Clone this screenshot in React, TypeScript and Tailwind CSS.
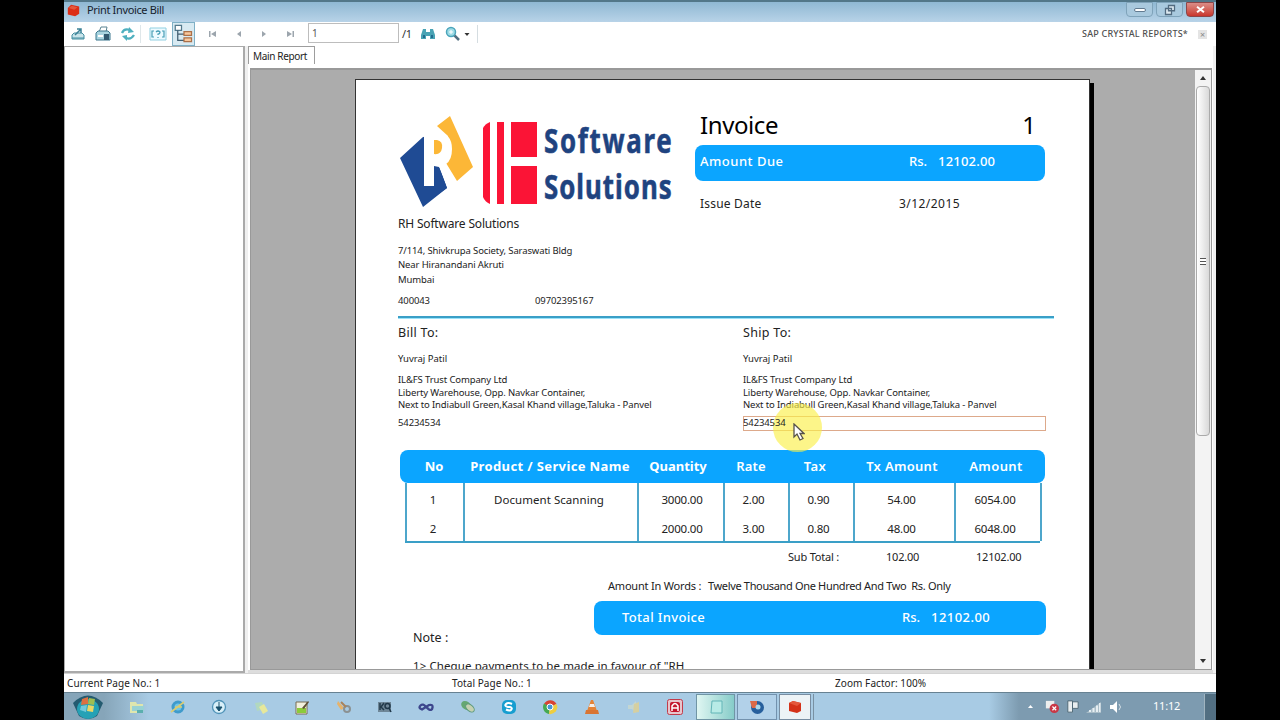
import type { ReactNode } from 'react';

const columns = [
    { label: 'No', head: 'w-[66px] pl-0.5 font-bold', cell: 'w-[58px] pr-1', values: ['1', '2'] },
    { label: 'Product / Service Name', head: 'w-[168px] font-bold tracking-[0.37px]', cell: 'w-[174px] pr-1', values: ['Document Scanning', ''] },
    { label: 'Quantity', head: 'w-[88px] font-bold', cell: 'w-[86px] pl-0.5', values: ['3000.00', '2000.00'] },
    { label: 'Rate', head: 'w-[58px] font-semibold tracking-[0.2px]', cell: 'w-[65px] pr-1.5', values: ['2.00', '3.00'] },
    { label: 'Tax', head: 'w-[70px] font-semibold tracking-[0.4px]', cell: 'w-[65px] pr-1.5', values: ['0.90', '0.80'] },
    { label: 'Tx Amount', head: 'w-[104px] font-semibold tracking-[0.3px]', cell: 'w-[101px] pr-1.5', values: ['54.00', '48.00'] },
    { label: 'Amount', head: 'w-[84px] font-semibold tracking-[0.4px]', cell: 'w-[88px] pr-1.5 border-r-2', values: ['6054.00', '6048.00'] },
];

function Icon({ size = 16, children }: { size?: number; children: ReactNode }) {
    return (
        <svg width={size} height={size} viewBox="0 0 16 16" fill="none" className="shrink-0">
            {children}
        </svg>
    );
}

function Logo() {
    return (
        <svg width="280" height="96" viewBox="0 0 280 96" className="block">
            <path d="M2 42 25 21 34 20V50L42 52 49 72 25 91Z" fill="#1f4b94" />
            <path d="M39 10 52 0 75 51 59 65 48 47 50 20Z" fill="#fcb737" />
            <path d="M26 16H39Q54 17 54 33 54 44 48 48L58 66 50 73 41 51H36V70H26Z" fill="#fff" />
            <path d="M36 24H39Q45 25 44 32 43 39 36 38Z" fill="#fcb737" />
            <path d="M36 50 41 51 49 72 36 81Z" fill="#1f4b94" />
            <path d="M92 6V88Q87 86 85 81V12Q87 8 92 6Z" fill="#fb1436" />
            <path d="M99 6h7v82h-7zM113 6h26v35h-26zM113 50h26v38h-26z" fill="#fb1436" />
            <g fontSize="34" fontWeight="700" fill="#1f4380" stroke="#1f4380" strokeWidth="0.6" transform="translate(146 0) scale(.76 1)">
                <text y="37" textLength="168" lengthAdjust="spacing">
                    Software
                </text>
                <text y="83" textLength="168" lengthAdjust="spacing">
                    Solutions
                </text>
            </g>
        </svg>
    );
}

function TitleBar() {
    return (
        <div className="flex h-[22px] shrink-0 items-start border-t-2 border-[#527789] bg-gradient-to-b from-[#8fb8d3] to-[#b8d3e8]">
            <div className="flex h-4 items-center pl-[3px]">
                <Icon size={13}>
                    <path d="M1 5 5 1 15 3V12L10 15 1 13Z" fill="#dc2d16" />
                    <path d="M2 5 6 2 13 4 9 7Z" fill="#e4583c" />
                </Icon>
                <span className="ml-[7px] text-[11px] leading-4 tracking-[-0.35px] text-[#16222c]">Print Invoice Bill</span>
            </div>
            <div className="ml-auto flex h-[15px] gap-[3px] pr-0.5">
                <div className="flex w-[27px] items-center justify-center rounded-b-sm border border-[#7fa3ba] bg-[#a9c9de]">
                    <span className="h-1 w-3 rounded-sm border border-[#627b91] bg-white" />
                </div>
                <div className="flex w-[27px] items-center justify-center rounded-b-sm border border-[#7fa3ba] bg-[#a9c9de]">
                    <Icon size={12}>
                        <path d="M6 2h8v7H6zM2 6h8v8H2z" fill="#dde9f0" stroke="#526b80" strokeWidth="1.7" />
                    </Icon>
                </div>
                <div className="flex w-[28px] items-center justify-center rounded-b-sm border border-[#8d4648] bg-gradient-to-b from-[#d98c87] to-[#c9332b]">
                    <Icon size={11}>
                        <path d="m3 4 10 8M13 4 3 12" stroke="#fff" strokeWidth="3" />
                    </Icon>
                </div>
            </div>
        </div>
    );
}

function Toolbar() {
    return (
        <div className="flex h-6 shrink-0 items-center bg-white">
            <div className="flex w-[76px] items-center gap-[9px] pl-[6px]">
                <Icon>
                    <path d="M2 9 4 7h8l2 2v4H2zM2 12h12" fill="#c9e4ea" stroke="#438da0" />
                    <path d="M5 9 11 3M7 3h4v4" stroke="#3b8196" strokeWidth="1.5" />
                </Icon>
                <Icon>
                    <path d="M4 6 6 1h6l-1 5" fill="#fff" stroke="#5a8392" />
                    <path d="M1 7 3 5h10l2 2v7H1z" fill="#a9d5e1" stroke="#3a778d" />
                    <path d="M9 8h5v6H9z" fill="#315a71" />
                    <path d="M3 9h5v2H3z" fill="#fff" />
                </Icon>
                <Icon>
                    <path d="M2 7Q4 2 10 4M14 9Q11 14 6 12" stroke="#4fb0bf" strokeWidth="2.3" />
                    <path d="m9 1 5 5-6 1zM7 9l-5 1 5 5z" fill="#4fb0bf" />
                </Icon>
            </div>
            <div className="h-[18px] w-px bg-[#dfe7ea]" />
            <div className="flex w-[33px] justify-center">
                <svg width="18" height="15" viewBox="0 0 18 15" fill="none">
                    <path d="M1 1h16v12H1z" fill="#edfaff" stroke="#91d0e2" />
                    <path d="M5 4H3v6h2M13 4h2v6h-2M7 5q2-2 4 0 0 2-2 2v1M9 10v1" stroke="#459db5" strokeWidth="1.2" />
                </svg>
            </div>
            <div className="-ml-0.5 flex h-6 w-[23px] items-center justify-center border border-[#7fb0c6] bg-[#d8eaf2]">
                <Icon size={20}>
                    <path d="M1 1h5v4H1z" fill="#fff" stroke="#53798c" />
                    <path d="M3 5v8h5M3 8h5" stroke="#415e71" />
                    <path d="M8 6h6v3H8zM8 11h6v3H8z" fill="#f8c79c" stroke="#ac7049" />
                </Icon>
            </div>
            <div className="flex w-[113px] items-center gap-[9.6px] pl-[10px] text-[#9ca5ad]">
                <Icon>
                    <path d="M4 5v6h1.5V5zM11 5v6L6 8z" fill="currentColor" />
                </Icon>
                <Icon>
                    <path d="M10 5v6L6 8z" fill="currentColor" />
                </Icon>
                <Icon>
                    <path d="M6 5v6l4-3z" fill="currentColor" />
                </Icon>
                <Icon>
                    <path d="M5 5v6l5-3zM10.5 5v6H12V5z" fill="currentColor" />
                </Icon>
            </div>
            <div className="-mt-0.5 flex h-5 w-[91px] items-center border border-[#bdbdbd] pl-[3px] text-[10px] text-[#555]">1</div>
            <span className="w-[21px] pl-[3px] text-[11px] tracking-[-0.4px] text-[#333]">/1</span>
            <Icon>
                <path d="M3 3h3v3h4V3h3l2 6v4h-5v-3H6v3H1V9z" fill="#49a3b4" />
                <path d="M3 9h2v3H3zM11 9h2v3h-2z" fill="#216c8f" />
            </Icon>
            <div className="ml-[9px]">
                <Icon>
                    <path d="m9 9 5 5" stroke="#526f81" strokeWidth="2.5" />
                    <circle cx="6" cy="6" r="4.5" fill="#9fdce6" stroke="#4ba5bb" strokeWidth="1.5" />
                    <path d="M4 6h4M6 4v4" stroke="#fff" />
                </Icon>
            </div>
            <svg width="7" height="5" className="ml-[3px]">
                <path d="M0.5 1h5L3 4z" fill="#333" />
            </svg>
            <div className="ml-1.5 h-[18px] w-px bg-[#d5dde1]" />
            <span className="ml-auto text-[9px] leading-3 font-medium tracking-[0.22px] text-[#4f4f4f]">SAP CRYSTAL REPORTS*</span>
            <div className="mr-[9px] ml-2.5 flex size-[9px] items-center justify-center bg-[#e4e4e4] text-[9px] leading-none text-[#888]">×</div>
        </div>
    );
}

const partyLines = ['IL&FS Trust Company Ltd', 'Liberty Warehouse, Opp. Navkar Container,', 'Next to Indiabull Green,Kasal Khand village,Taluka - Panvel'];

function Party({ title, selected = false }: { title: string; selected?: boolean }) {
    return (
        <div className="text-[9.5px] tracking-[-0.12px]">
            <div className="h-7 text-[12.5px] leading-7 tracking-[0.3px]">{title}</div>
            <div className="mt-[5px] h-[14px] leading-[14px] tracking-[0px]">Yuvraj Patil</div>
            <div className="mt-[8px]">
                {partyLines.map((line) => (
                    <div key={line} className="h-[12.5px] leading-[12.5px] whitespace-nowrap">
                        {line}
                    </div>
                ))}
            </div>
            <div className={selected ? 'relative mt-[4.5px] h-[15px] w-[303px] border border-[#dda98b]' : 'relative mt-[4.5px] h-[15px]'}>
                {selected && (
                    <>
                        <span className="absolute top-[-14px] left-[29px] size-[49px] rounded-full bg-[#fbef4a]/65" />
                        <svg width="12" height="18" viewBox="0 0 12 18" className="absolute top-[6px] left-[49px]">
                            <path d="M1 1v13l3-3 3 6 3-1.500-3-5h4z" fill="#fff" stroke="#56524b" strokeWidth="1.3" />
                        </svg>
                    </>
                )}
                <span className={selected ? 'relative -ml-px block leading-[12px]' : 'block leading-[14px]'}>54234534</span>
            </div>
        </div>
    );
}

function InvoicePage() {
    return (
        <div className="ml-[104px] flex h-[591px] shrink-0">
            <div className="h-full w-[735px] overflow-hidden border-t border-r border-l border-[#333] bg-white pt-px pl-[42px] text-[#222]">
                <div className="flex h-[235px]">
                    <div className="w-[297px]">
                        <div className="mt-[35px] h-[99px]">
                            <Logo />
                        </div>
                        <div className="h-5 text-[12px] leading-[18px] tracking-[-0.18px]">RH Software Solutions</div>
                        <div className="mt-[8.5px] text-[9.5px] leading-[14.5px] tracking-[-0.12px]">
                            <div>7/114, Shivkrupa Society, Saraswati Bldg</div>
                            <div>Near Hiranandani Akruti</div>
                            <div>Mumbai</div>
                            <div className="mt-[7px] flex">
                                <span className="w-[137px]">400043</span>
                                <span>09702395167</span>
                            </div>
                        </div>
                    </div>
                    <div className="w-[350px] pt-[25px]">
                        <div className="flex h-[39px] justify-between pr-[9px] pl-[5px] text-[24px] leading-[38px] text-black">
                            <span className="tracking-[-0.4px]">Invoice</span>
                            <span>1</span>
                        </div>
                        <div className="flex h-9 rounded-lg bg-[#0ba5ff] pl-[5px] text-[13px] leading-[32px] font-medium text-white">
                            <span className="w-[209px] tracking-[0.5px]">Amount Due</span>
                            <span className="w-[29px]">Rs.</span>
                            <span className="tracking-[0.2px]">12102.00</span>
                        </div>
                        <div className="mt-[13px] flex pl-[5px] text-[12px] leading-5">
                            <span className="w-[199px] tracking-[0.2px]">Issue Date</span>
                            <span className="tracking-[0.45px]">3/12/2015</span>
                        </div>
                    </div>
                </div>
                <div className="h-[3px] w-[656px] border-b border-[#9ae3fa] bg-[#3a9fc7]" />
                <div className="flex">
                    <div className="w-[345px]">
                        <Party title="Bill To:" />
                    </div>
                    <Party title="Ship To:" selected />
                </div>
                <div className="mt-[19px] ml-0.5 w-[645px]">
                    <div className="flex h-[33px] rounded-lg bg-[#0ba5ff] text-center text-[13px] leading-[32px] whitespace-nowrap text-white">
                        {columns.map((column) => (
                            <div key={column.label} className={column.head}>
                                {column.label}
                            </div>
                        ))}
                    </div>
                    <div className="ml-[5px] flex h-[58px] text-center text-[11.5px] tracking-[-0.2px]">
                        {columns.map((column) => (
                            <div key={column.label} className={`border-l-2 border-[#4da6cb] pt-0.5 ${column.cell}`}>
                                {column.values.map((value, i) => (
                                    <div key={i} className={column.label.startsWith('Product') ? 'h-[29px] leading-[29px] tracking-[0.05px]' : 'h-[29px] leading-[29px]'}>
                                        {value}
                                    </div>
                                ))}
                            </div>
                        ))}
                    </div>
                    <div className="ml-[5px] h-0.5 w-[635px] bg-[#3a9fc7]" />
                </div>
                <div className="mt-1 flex h-5 pl-[390px] text-[11px] leading-5 tracking-[-0.2px]">
                    <span className="w-[98px]">Sub Total :</span>
                    <span className="w-[90px]">102.00</span>
                    <span>12102.00</span>
                </div>
                <div className="mt-[9px] flex h-5 pl-[210px] text-[11px] leading-5 tracking-[-0.2px]">
                    <span className="w-[100px]">Amount In Words :</span>
                    <span className="tracking-[-0.34px]">Twelve Thousand One Hundred And Two&nbsp; Rs. Only</span>
                </div>
                <div className="mt-[5px] ml-[196px] flex h-[34px] w-[452px] rounded-lg bg-[#0ba5ff] pl-[28px] text-[13px] leading-[32px] font-medium text-white">
                    <span className="w-[280px] tracking-[0.35px]">Total Invoice</span>
                    <span className="w-[29px]">Rs.</span>
                    <span className="tracking-[0.45px]">12102.00</span>
                </div>
                <div className="-mt-[8px] pl-[15px] text-[12.5px] leading-[22px]">Note :</div>
                <div className="mt-[7px] pl-[15px] text-[11.5px] leading-[20px] tracking-[0.1px]">1&gt; Cheque payments to be made in favour of "RH</div>
            </div>
            <div className="mt-1 w-1 bg-black" />
        </div>
    );
}

const taskIcons: { name: string; art: ReactNode }[] = [
    {
        name: 'explorer',
        art: (
            <>
                <path d="M1 3h6l1 2h6v9H1z" fill="#dfe6ae" />
                <path d="M3 7h12v5H3z" fill="#99d2d4" />
                <path d="M8 11h6v3H8z" fill="#5bafae" />
            </>
        ),
    },
    {
        name: 'ie',
        art: (
            <>
                <circle cx="8" cy="8" r="5" fill="#6ec5e9" stroke="#3f9bcb" strokeWidth="3" />
                <path d="M5 8h7M1 13Q5 10 14 3" stroke="#d8cb72" strokeWidth="1.7" />
            </>
        ),
    },
    {
        name: 'sync',
        art: (
            <>
                <circle cx="8" cy="8" r="6.5" fill="#d8eff8" stroke="#4e92b7" strokeWidth="1.3" />
                <path d="M8 3v9M5 8h6l-3 4z" fill="#18516c" stroke="#18516c" />
            </>
        ),
    },
    {
        name: 'notes',
        art: (
            <>
                <path d="m2 4 7-1 2 7-7 2z" fill="#b1d8bf" />
                <path d="m6 8 5-3 4 7-5 3z" fill="#e7e89b" />
            </>
        ),
    },
    {
        name: 'editor',
        art: (
            <>
                <path d="M2 3h11v12H2z" fill="#f2f1dd" stroke="#786d54" />
                <path d="M3 9h9v5H3z" fill="#8bcb3a" />
                <path d="m8 9 6-7 1 1-5 7z" fill="#5f5034" />
            </>
        ),
    },
    {
        name: 'tools',
        art: (
            <>
                <path d="m2 2 6 7-3 2-4-6z" fill="#e7b36b" />
                <circle cx="11" cy="10" r="3" stroke="#8b9192" strokeWidth="2" />
                <path d="m5 3 5 5" stroke="#a9825a" strokeWidth="2" />
            </>
        ),
    },
    {
        name: 'query',
        art: (
            <>
                <path d="M1 3h13v10H1z" fill="#6e8697" />
                <path d="M3 4v7M7 4 4 8l3 3" stroke="#233b4c" strokeWidth="1.5" />
                <circle cx="10.5" cy="7" r="2.5" stroke="#20384a" strokeWidth="1.5" />
                <path d="m12 9 2 4" stroke="#20384a" strokeWidth="1.5" />
            </>
        ),
    },
    {
        name: 'studio',
        art: <path d="M8 8Q5 4 2.500 6.500t1.500 4l7-4.500q4-1 3.500 2.500T11 10.500z" stroke="#3d468c" strokeWidth="2.3" />,
    },
    {
        name: 'database',
        art: (
            <>
                <ellipse cx="6" cy="6.5" rx="5.5" ry="4" fill="#65a772" transform="rotate(35 6 7)" />
                <ellipse cx="10" cy="9" rx="5" ry="3" fill="#c5d1b1" stroke="#5f9b7d" transform="rotate(40 10 9)" />
            </>
        ),
    },
    {
        name: 'skype',
        art: (
            <>
                <rect x="1" y="1" width="14" height="14" rx="5" fill="#179ed0" />
                <path d="M11 5Q7 3 5 5t2 3h2q3 1 1 3-2 1-5-.5" stroke="#fff" strokeWidth="2" />
            </>
        ),
    },
    {
        name: 'chrome',
        art: (
            <>
                <path d="M8 8 2 5A7 7 0 0 1 14.500 5Z" fill="#d94332" />
                <path d="M8 8 7 15A7 7 0 0 1 2 4.500Z" fill="#47a951" />
                <path d="M8 8 14.500 5A7 7 0 0 1 7 15Z" fill="#efce40" />
                <circle cx="8" cy="8" r="3" fill="#4698d5" stroke="#fff" />
            </>
        ),
    },
    {
        name: 'player',
        art: (
            <>
                <path d="M7 1h2l4 11H3z" fill="#e48336" />
                <path d="M6 5h4l1 3H5z" fill="#f7eee5" />
                <path d="M2 11h12l1 4H1z" fill="#d97533" />
            </>
        ),
    },
    {
        name: 'sound',
        art: (
            <>
                <path d="M3 6h4l4-4v12l-4-4H3z" fill="#c3d6d2" />
                <path d="M9 5l5-2v10l-6 1z" fill="#d5cfa0" />
            </>
        ),
    },
    {
        name: 'access',
        art: (
            <>
                <rect x="0.5" y="0.5" width="15" height="15" rx="2" fill="#e7c5cc" stroke="#c23b4b" />
                <rect x="3" y="3" width="10" height="10" rx="2" fill="#c4162d" />
                <path d="M5 12V7q3-5 6 0v5M5 9h6" stroke="#fff" strokeWidth="1.5" />
            </>
        ),
    },
];

function Taskbar() {
    return (
        <div className="flex h-7 shrink-0 items-center border-t border-[#678292] bg-[linear-gradient(90deg,#86a5b9_0px,#86a5b9_40px,#a8cbe4_85px,#a8cbe4_925px,#7d9bb0_955px)]">
            <div className="flex w-[52px] pl-2">
                <svg width="32" height="27" viewBox="0 0 32 27">
                    <path d="M1 10Q16-5 31 10L25 23Q16 29 7 23Z" fill="#245b70" />
                    <ellipse cx="16" cy="16" rx="11" ry="10" fill="#25a1b5" />
                    <path d="m10 6 6-2v7l-7 1z" fill="#dc7042" />
                    <path d="m17 5 6 1-1 6-6-1z" fill="#9fbd52" />
                    <path d="m9 13 6-1-1 7-6-2z" fill="#71c9dc" />
                    <path d="m16 12 6 1-1 6-6-1z" fill="#ead765" />
                </svg>
            </div>
            {taskIcons.map((item) => (
                <div key={item.name} className="flex w-[41.38px] justify-center">
                    <Icon>{item.art}</Icon>
                </div>
            ))}
            <div className="ml-px flex h-[26px] gap-0.5">
                <div className="flex w-[39px] items-center justify-center border border-[#7095a5] bg-gradient-to-r from-[#dff6f2] to-[#86ccc9]">
                    <Icon>
                        <path d="M4 2h10v12H3z" fill="#b8ebe6" stroke="#62b5b7" />
                    </Icon>
                </div>
                <div className="flex w-10 items-center justify-center border border-[#7392ae] bg-[#b2d1e9]">
                    <Icon>
                        <circle cx="8.5" cy="8.5" r="6.5" fill="#275f9c" />
                        <path d="M1 2h7v7H3z" fill="#db6a48" />
                        <circle cx="9" cy="8" r="2.5" fill="#a8d9ec" />
                    </Icon>
                </div>
                <div className="flex w-8 items-center justify-center border border-[#788da1] bg-[#edf3f6]">
                    <Icon>
                        <path d="M2 4 6 2l8 2v8l-4 2-8-2z" fill="#d43219" />
                        <path d="m2 4 4-2 8 2-4 3z" fill="#e4583c" />
                    </Icon>
                </div>
                <div className="w-px bg-[#7890a2]" />
            </div>
            <div className="ml-auto flex items-center gap-[6px] text-white">
                <svg width="5" height="4">
                    <path d="M0 3h5L2.500 0z" fill="#fff" />
                </svg>
                <div className="ml-[5px]">
                    <Icon size={15}>
                        <path d="M2 2h9v8H2z" fill="#eee" />
                        <circle cx="11" cy="10" r="5" fill="#c93745" />
                        <path d="m9 8 4 4m0-4-4 4" stroke="#fff" strokeWidth="1.3" />
                    </Icon>
                </div>
                <Icon size={15}>
                    <path d="M3 2h5v12H3zM8 3h6v7H8z" fill="#e9eef0" stroke="#4f6775" />
                </Icon>
                <Icon>
                    <path d="M0 14 15 3V14Z" fill="#a9bdc8" />
                    <path d="M3 13h2v-2H3zM6.500 13h2V9h-2zM10 13h2V6.500h-2zM13 13h1.500V4H13z" fill="#e6eef2" />
                </Icon>
                <Icon>
                    <path d="M2 6h3l4-4v12l-4-4H2z" fill="#fff" />
                    <path d="M11 5q3 3 0 6" stroke="#d7e2e9" />
                </Icon>
                <span className="ml-[23px] w-[45px] text-[11px] tracking-[-0.2px]">11:12</span>
                <span className="h-[26px] w-3 border-l border-[#a0b4c0] bg-[#526f82]" />
            </div>
        </div>
    );
}

export default function App() {
    return (
        <div className="flex h-[720px] w-[1280px] justify-center overflow-hidden bg-black font-['Noto_Sans',sans-serif]">
            <div className="flex h-[720px] w-[1152px] flex-col bg-[#f1f1f1]">
                <TitleBar />
                <Toolbar />
                <div className="flex h-[627px] shrink-0 bg-[#f0f0f0]">
                    <div className="h-[627px] w-[181px] border-t border-r-2 border-b-2 border-l border-[#aaa] bg-white" />
                    <div className="ml-[3px] flex w-[965px] flex-col bg-white">
                        <div className="flex h-[22px] items-start">
                            <div className="h-[18px] w-[67px] border-t border-r border-l border-[#9d9d9d] pl-1 text-[10px] leading-[18px] tracking-[-0.35px] whitespace-nowrap text-[#222]">
                                Main Report
                            </div>
                        </div>
                        <div className="ml-0.5 flex h-[602px] w-[962px] border border-t-2 border-[#999]">
                            <div className="flex h-full w-[944px] overflow-hidden bg-[#acacac] pt-[9px]">
                                <InvoicePage />
                            </div>
                            <div className="flex w-4 flex-col items-center bg-[#f3f3f3]">
                                <svg width="8" height="16" viewBox="0 0 8 16">
                                    <path d="M1 10h6L4 6z" fill="#333" />
                                </svg>
                                <div className="flex h-[350px] w-3.5 items-center justify-center rounded-sm border border-[#aaa] bg-gradient-to-r from-white to-[#d9d9d9]">
                                    <span className="h-[7px] w-1.5 border-y border-[#555] bg-[linear-gradient(#fff_0_2px,#555_2px_3px,#fff_3px)]" />
                                </div>
                                <svg width="8" height="16" viewBox="0 0 8 16" className="mt-auto">
                                    <path d="M1 6h6L4 10z" fill="#333" />
                                </svg>
                            </div>
                        </div>
                        <div className="h-[3px] bg-[#ddd]" />
                    </div>
                </div>
                <div className="flex h-[19px] shrink-0 items-center border-t border-[#d4d4d4] bg-white pl-[3px] text-[10px] leading-[18px] tracking-[0.07px] text-[#222]">
                    <span className="w-[385px]">Current Page No.: 1</span>
                    <span className="w-[383px]">Total Page No.: 1</span>
                    <span>Zoom Factor: 100%</span>
                </div>
                <Taskbar />
            </div>
        </div>
    );
}
